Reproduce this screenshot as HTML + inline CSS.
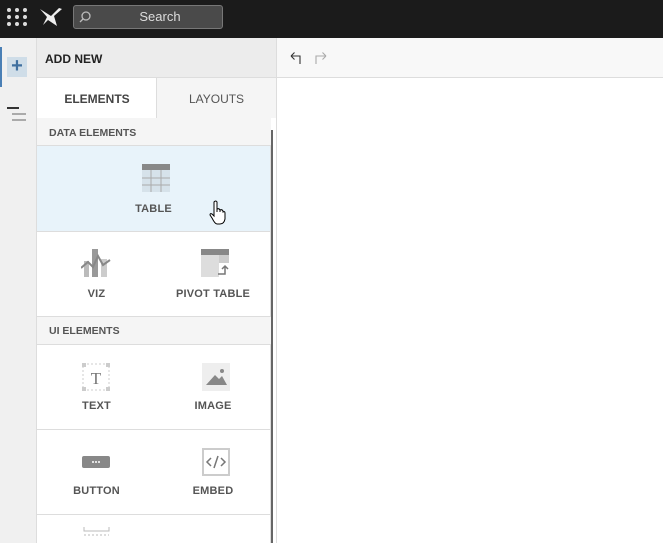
<!DOCTYPE html>
<html><head><style>
*{box-sizing:border-box;margin:0;padding:0}
html,body{width:663px;height:543px;overflow:hidden}
body{background:#fff;font-family:"Liberation Sans",sans-serif;position:relative}
.a{position:absolute}
.lbl{position:absolute;width:100%;text-align:center;font-size:11px;font-weight:bold;color:#555;letter-spacing:.2px}
.cell{position:absolute;background:#fff;border-right:1px solid #ddd;border-bottom:1px solid #ddd;overflow:hidden}
.sec{position:absolute;left:37px;width:234px;background:#f5f5f5;font-size:10.5px;font-weight:bold;color:#555;padding-left:12px;border-bottom:1px solid #ddd}
</style></head><body>
<div class="a" style="left:0;top:0;width:663px;height:38px;background:#1b1b1b"></div>
<svg class="a" style="left:6px;top:6px" width="24" height="24" fill="#ddd">
<circle cx="3" cy="4" r="2"/><circle cx="11" cy="4" r="2"/><circle cx="19" cy="4" r="2"/>
<circle cx="3" cy="11" r="2"/><circle cx="11" cy="11" r="2"/><circle cx="19" cy="11" r="2"/>
<circle cx="3" cy="18" r="2"/><circle cx="11" cy="18" r="2"/><circle cx="19" cy="18" r="2"/></svg>
<svg class="a" style="left:39px;top:6px" width="24" height="22"><path d="M1 3 L12 10 L20 2 L23 3 L15 10 L18 20 L9 14 L4 19 L8 11 Z" fill="#eee"/></svg>
<div class="a" style="left:73px;top:5px;width:150px;height:24px;background:#4a4a4a;border:1px solid #777;border-radius:3px;color:#ddd;font-size:13px;line-height:22px;text-align:center;padding-left:24px">Search</div>
<svg class="a" style="left:79px;top:10px" width="14" height="14"><circle cx="7" cy="6" r="4" stroke="#bbb" fill="none" stroke-width="1.3"/><path d="M4 9 L1 12" stroke="#bbb" stroke-width="1.3"/></svg>
<div class="a" style="left:0;top:38px;width:37px;height:505px;background:#f0f0f0;border-right:1px solid #ddd"></div>
<div class="a" style="left:0;top:47px;width:2px;height:40px;background:#4a7fb5"></div>
<div class="a" style="left:7px;top:57px;width:20px;height:20px;background:#cfdde8;color:#3f6f9f;font-size:20px;line-height:18px;text-align:center;font-weight:bold">+</div>
<div class="a" style="left:7px;top:107px;width:12px;height:2px;background:#333"></div>
<div class="a" style="left:12px;top:113px;width:14px;height:2px;background:#aaa"></div>
<div class="a" style="left:12px;top:119px;width:14px;height:2px;background:#aaa"></div>
<div class="a" style="left:37px;top:38px;width:240px;height:40px;background:#ececec;border-bottom:1px solid #ddd;border-right:1px solid #ddd;font-size:12px;font-weight:bold;color:#222;line-height:42px;padding-left:8px">ADD NEW</div>
<div class="a" style="left:37px;top:78px;width:120px;height:40px;background:#fff;font-size:12px;color:#444;text-align:center;line-height:42px;font-weight:bold">ELEMENTS</div>
<div class="a" style="left:156px;top:78px;width:121px;height:41px;background:#f5f5f5;border-left:1px solid #ddd;border-bottom:1px solid #ddd;border-right:1px solid #ddd;font-size:12px;color:#555;text-align:center;line-height:42px">LAYOUTS</div>
<div class="a" style="left:37px;top:118px;width:240px;height:425px;background:#fff;border-right:1px solid #ddd"></div>
<div class="sec" style="top:118px;height:28px;line-height:30px">DATA ELEMENTS</div>
<div class="cell" style="left:37px;top:146px;width:234px;height:86px;background:#e8f3fa">
<svg class="a" style="left:105px;top:18px" width="29" height="29"><rect x="0" y="0" width="28" height="6" fill="#888"/><rect x="0" y="6" width="28" height="22" fill="#d6e2ea"/><path d="M9 6V28M19 6V28M0 14H28M0 21H28" stroke="#aaa"/></svg>
<div class="lbl" style="top:57px">TABLE</div></div>
<svg class="a" style="left:209px;top:200px" width="18" height="26"><path d="M5 2 Q7 0 8 2 V12 V9 Q10 8 11 10 V12 V10 Q13 9 14 11 V12 Q16 11 16 13 V19 Q15 24 11 24 H8 Q6 24 3 18 L1 15 Q1 13 3 14 L5 16 Z" fill="#fff" stroke="#000" stroke-width="1"/></svg>
<div class="cell" style="left:37px;top:232px;width:120px;height:85px">
<svg class="a" style="left:44px;top:17px" width="30" height="28"><rect x="3" y="12" width="5" height="16" fill="#bbb"/><rect x="11" y="0" width="6" height="28" fill="#999"/><rect x="20" y="10" width="6" height="18" fill="#ccc"/><path d="M0 19 L7 13 L12 18 L17 7 L22 16 L29 11" stroke="#888" stroke-width="2" fill="none"/></svg>
<div class="lbl" style="top:56px">VIZ</div></div>
<div class="cell" style="left:156px;top:232px;width:115px;height:85px">
<svg class="a" style="left:45px;top:17px" width="29" height="28"><rect x="0" y="0" width="28" height="6" fill="#888"/><rect x="0" y="6" width="18" height="22" fill="#ddd"/><rect x="18" y="6" width="10" height="8" fill="#ccc"/><path d="M17 25 H24 V17 M21 20 L24 17 L27 20" stroke="#777" stroke-width="1.5" fill="none"/></svg>
<div class="lbl" style="top:56px">PIVOT TABLE</div></div>
<div class="sec" style="top:317px;height:28px;line-height:28px">UI ELEMENTS</div>
<div class="cell" style="left:37px;top:345px;width:120px;height:85px">
<svg class="a" style="left:45px;top:18px" width="28" height="28"><rect x="1" y="1" width="26" height="26" fill="none" stroke="#ccc" stroke-dasharray="2 2"/><rect x="0" y="0" width="4" height="4" fill="#ccc"/><rect x="24" y="0" width="4" height="4" fill="#ccc"/><rect x="0" y="24" width="4" height="4" fill="#ccc"/><rect x="24" y="24" width="4" height="4" fill="#ccc"/><text x="14" y="21" text-anchor="middle" font-family="Liberation Serif" font-size="17" fill="#777">T</text></svg>
<div class="lbl" style="top:55px">TEXT</div></div>
<div class="cell" style="left:156px;top:345px;width:115px;height:85px">
<svg class="a" style="left:46px;top:18px" width="28" height="28"><rect width="28" height="28" fill="#eee"/><path d="M4 22 L13 12 L17 16 L20 13 L25 22 Z" fill="#888"/><circle cx="20" cy="8" r="2" fill="#888"/></svg>
<div class="lbl" style="top:55px">IMAGE</div></div>
<div class="cell" style="left:37px;top:430px;width:120px;height:85px">
<svg class="a" style="left:45px;top:26px" width="28" height="12"><rect width="28" height="12" rx="2" fill="#888"/><circle cx="11" cy="6" r="1" fill="#fff"/><circle cx="14" cy="6" r="1" fill="#fff"/><circle cx="17" cy="6" r="1" fill="#fff"/></svg>
<div class="lbl" style="top:55px">BUTTON</div></div>
<div class="cell" style="left:156px;top:430px;width:115px;height:85px">
<svg class="a" style="left:46px;top:18px" width="28" height="28"><rect x="1" y="1" width="26" height="26" fill="none" stroke="#ccc" stroke-width="2"/><path d="M9 10 L5 14 L9 18 M19 10 L23 14 L19 18 M16 8 L12 20" stroke="#777" stroke-width="1.5" fill="none"/></svg>
<div class="lbl" style="top:55px">EMBED</div></div>
<div class="cell" style="left:37px;top:515px;width:120px;height:28px;border-bottom:none"><svg class="a" style="left:46px;top:12px" width="27" height="10"><path d="M1 0V4H26V0" stroke="#bbb" fill="none"/><path d="M1 8H26" stroke="#bbb" stroke-dasharray="2 2"/></svg></div>
<div class="cell" style="left:156px;top:515px;width:115px;height:28px;border-bottom:none"></div>
<div class="a" style="left:271px;top:130px;width:2px;height:413px;background:#666"></div>
<div class="a" style="left:277px;top:38px;width:386px;height:40px;background:#f8f8f8;border-bottom:1px solid #ddd"></div>
<svg class="a" style="left:288px;top:50px" width="40" height="18"><path d="M3 6 H12 V14 M3 6 L6.5 2.5 M3 6 L6.5 9.5" stroke="#333" stroke-width="1.1" fill="none"/><path d="M28 14 V6 H38 M38 6 L34.5 2.5 M38 6 L34.5 9.5" stroke="#aaa" stroke-width="1.1" fill="none"/></svg>
</body></html>
